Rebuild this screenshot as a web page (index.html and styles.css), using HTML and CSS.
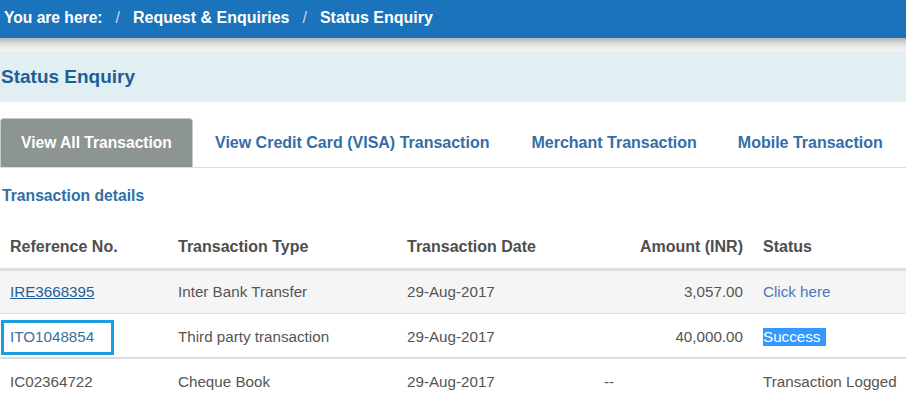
FILE: index.html
```html
<!DOCTYPE html>
<html>
<head>
<meta charset="utf-8">
<link rel="stylesheet" href="styles.css">
</head>
<body>
<div class="crumbs">
  <span class="crumb">You are here:</span>
  <span class="sep">/</span>
  <span class="crumb">Request &amp; Enquiries</span>
  <span class="sep">/</span>
  <span class="crumb">Status Enquiry</span>
</div>
<div class="shadow"></div>
<div class="title-panel"><h1 class="title">Status Enquiry</h1></div>
<div class="tabs">
  <div class="tab active">View All Transaction</div>
  <div class="tab">View Credit Card (VISA) Transaction</div>
  <div class="tab">Merchant Transaction</div>
  <div class="tab">Mobile Transaction</div>
</div>
<h2 class="section">Transaction details</h2>
<table class="tx">
  <colgroup>
    <col class="c1"><col class="c2"><col class="c3"><col class="c4"><col class="c5">
  </colgroup>
  <thead>
    <tr>
      <th>Reference No.</th>
      <th>Transaction Type</th>
      <th>Transaction Date</th>
      <th class="num">Amount (INR)</th>
      <th>Status</th>
    </tr>
  </thead>
  <tbody>
    <tr class="odd">
      <td><a class="ref" href="#">IRE3668395</a></td>
      <td>Inter Bank Transfer</td>
      <td>29-Aug-2017</td>
      <td class="num">3,057.00</td>
      <td><span class="click">Click here</span></td>
    </tr>
    <tr class="mid">
      <td class="boxed"><span class="ref2">ITO1048854</span><span class="mark"></span></td>
      <td>Third party transaction</td>
      <td>29-Aug-2017</td>
      <td class="num">40,000.00</td>
      <td><span class="sel">Success </span></td>
    </tr>
    <tr class="last">
      <td>IC02364722</td>
      <td>Cheque Book</td>
      <td>29-Aug-2017</td>
      <td class="dash">--</td>
      <td>Transaction Logged</td>
    </tr>
  </tbody>
</table>
</body>
</html>
```
FILE: styles.css
```css
html, body {
  margin: 0;
  padding: 0;
  background: #ffffff;
  font-family: "Liberation Sans", Arial, sans-serif;
  overflow: hidden;
}
.crumbs {
  height: 38px;
  background: #1b74bb;
  display: flex;
  align-items: center;
  padding-left: 4px;
  color: #ffffff;
  font-size: 16px;
  font-weight: bold;
  box-sizing: border-box;
  padding-bottom: 3px;
}
.crumb:first-child { font-size: 15.6px; }
.sep {
  color: #c9d6e3;
  font-weight: normal;
  margin: 0 13px 0 13px;
}
.shadow {
  height: 14px;
  background: linear-gradient(#b4b4b4 0px, #d8d8d8 5px, #ececec 9px, #f3f3f3 14px);
}
.title-panel {
  height: 50px;
  background: #e1eef2;
  display: flex;
  align-items: center;
}
.title {
  margin: 0;
  padding-left: 1px;
  font-size: 19px;
  font-weight: bold;
  color: #1d5f96;
  padding-bottom: 1px;
}
.tabs {
  margin-top: 16px;
  height: 49px;
  display: flex;
  border-bottom: 1px solid #dddddd;
}
.tab {
  padding: 0 20px 0 20px;
  margin-right: 2px;
  display: flex;
  align-items: center;
  font-size: 16px;
  font-weight: bold;
  color: #336ea8;
  white-space: nowrap;
}
.tab.active {
  background: #8d9592;
  color: #ffffff;
  border: 1px solid #c6cac8;
  border-bottom: none;
  border-radius: 4px 4px 0 0;
  padding: 0 10px;
  width: 193px;
  box-sizing: border-box;
  justify-content: center;
  margin-right: 0;
  font-size: 15.6px;
}
.tab.active + .tab { padding-left: 22px; }
.tab:last-child { padding-left: 19px; }
.section {
  margin: 0;
  padding: 19px 0 0 2px;
  height: 38px;
  box-sizing: border-box;
  font-size: 15.7px;
  font-weight: bold;
  color: #336ea8;
}
.tx {
  width: 906px;
  border-collapse: collapse;
  table-layout: fixed;
  font-size: 15.2px;
  color: #555555;
}
.c1 { width: 168px; }
.c2 { width: 229px; }
.c3 { width: 150px; }
.c4 { width: 206px; }
.c5 { width: 153px; }
.tx th {
  text-align: left;
  font-weight: bold;
  font-size: 16px;
  color: #4e4e4e;
  height: 63px;
  padding: 21px 10px 0 10px;
  box-sizing: border-box;
  border-bottom: 3px solid #dddddd;
  white-space: nowrap;
}
.tx td {
  padding: 0 10px;
  height: 44px;
  box-sizing: border-box;
  white-space: nowrap;
  border-bottom: 1px solid #dddddd;
}
.tx tr.odd td { background: #f5f5f5; }
.tx tr.mid td { border-bottom: 2px solid #dddddd; height: 45px; padding-top: 3px; }
.tx tr.last td { padding-top: 2px; }
.tx .num { text-align: right; }
.tx td.dash { padding-left: 57px; }
.ref {
  color: #1f5f99;
  text-decoration: underline;
}
.ref2 { color: #3e6e9c; }
.click { color: #4a78b5; }
.boxed { position: relative; }
.mark {
  position: absolute;
  left: 1px;
  top: 6px;
  width: 113px;
  height: 35px;
  border: 3px solid #1b9ee0;
  box-sizing: border-box;
}
.sel {
  background: #3399ff;
  color: #ffffff;
  white-space: pre;
  display: inline-block;
  line-height: 18px;
  padding-right: 1px;
}
```
